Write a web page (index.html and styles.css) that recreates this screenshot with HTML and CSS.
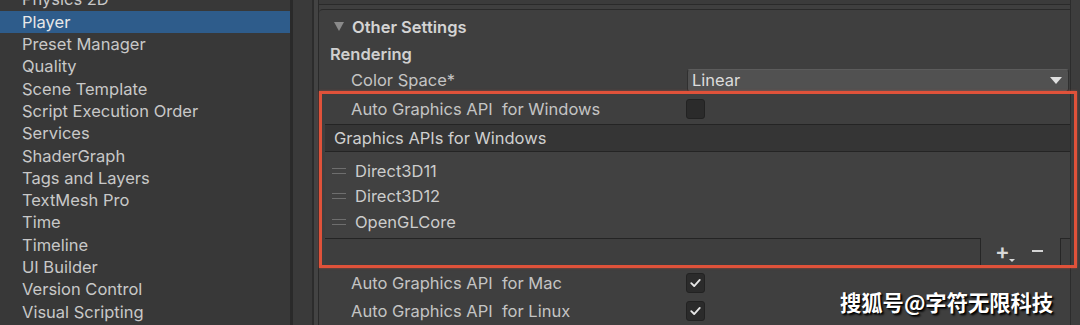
FILE: index.html
```html
<!DOCTYPE html>
<html lang="en">
<head>
    <meta charset="UTF-8">
    <title>Project Settings - Player</title>
    <link rel="stylesheet" href="styles.css">
</head>
<body>
    <div class="window">
        <!-- Settings category list -->
        <aside class="sidebar">
            <ul class="category-list">
                <li>Physics 2D</li>
                <li class="selected">Player</li>
                <li>Preset Manager</li>
                <li>Quality</li>
                <li>Scene Template</li>
                <li>Script Execution Order</li>
                <li>Services</li>
                <li>ShaderGraph</li>
                <li>Tags and Layers</li>
                <li>TextMesh Pro</li>
                <li>Time</li>
                <li>Timeline</li>
                <li>UI Builder</li>
                <li>Version Control</li>
                <li>Visual Scripting</li>
            </ul>
        </aside>

        <div class="splitter"></div>

        <!-- Inspector -->
        <main class="inspector">
            <div class="inspector-body">
                <div class="prev-section"></div>
                <section class="foldout">
                    <div class="foldout-header">
                        <span class="fold-arrow"></span>
                        <span>Other Settings</span>
                    </div>
                    <div class="group-title">Rendering</div>
                    <div class="field-row row-color">
                        <span class="field-label">Color Space*</span>
                        <div class="dropdown">
                            <span>Linear</span>
                            <span class="dropdown-arrow"></span>
                        </div>
                    </div>

                    <div class="highlight">
                        <div class="field-row row-windows">
                            <span class="field-label">Auto Graphics API&nbsp; for Windows</span>
                            <span class="checkbox"></span>
                        </div>
                        <div class="api-list">
                            <div class="api-header">Graphics APIs for Windows</div>
                            <div class="api-items">
                                <div class="api-item"><span class="handle"></span>Direct3D11</div>
                                <div class="api-item"><span class="handle"></span>Direct3D12</div>
                                <div class="api-item"><span class="handle"></span>OpenGLCore</div>
                            </div>
                            <div class="api-footer">
                                <div class="footer-fill"></div>
                                <div class="footer-buttons">
                                    <span class="btn-add">+<span class="caret"></span></span>
                                    <span class="btn-remove"></span>
                                </div>
                                <div class="footer-end"></div>
                            </div>
                        </div>
                    </div>

                    <div class="field-row row-after">
                        <span class="field-label">Auto Graphics API&nbsp; for Mac</span>
                        <span class="checkbox checked">
                            <svg viewBox="0 0 18 18" width="18" height="18"><path d="M4.5 9.2 L7.6 12.2 L13.5 5.8" fill="none" stroke="#e6e6e6" stroke-width="2" stroke-linecap="round" stroke-linejoin="round"/></svg>
                        </span>
                    </div>
                    <div class="field-row">
                        <span class="field-label">Auto Graphics API&nbsp; for Linux</span>
                        <span class="checkbox checked">
                            <svg viewBox="0 0 18 18" width="18" height="18"><path d="M4.5 9.2 L7.6 12.2 L13.5 5.8" fill="none" stroke="#e6e6e6" stroke-width="2" stroke-linecap="round" stroke-linejoin="round"/></svg>
                        </span>
                    </div>
                </section>
            </div>
            <div class="scroll-strip"></div>
        </main>
    </div>

    <div class="watermark">搜狐号@字符无限科技</div>
</body>
</html>
```

FILE: styles.css
```css
* {
    margin: 0;
    padding: 0;
    box-sizing: border-box;
}

body {
    background: #383838;
    color: #c6c6c6;
    font-family: Inter, "Noto Sans", Arial, sans-serif;
    font-size: 16.5px;
    width: 1080px;
    height: 325px;
    overflow: hidden;
    position: relative;
}

.window {
    display: flex;
    height: 325px;
}

/* Left category list */
.sidebar {
    width: 290px;
    background: #383838;
    overflow: hidden;
}

.category-list {
    list-style: none;
    margin-top: -11.8px;
}

.category-list li {
    height: 22.33px;
    line-height: 22.33px;
    padding-left: 22px;
    color: #c8c8c8;
    white-space: nowrap;
}

.category-list li.selected {
    background: #2e5c8b;
    color: #e8e8e8;
}

/* Splitter between panels */
.splitter {
    width: 28px;
    background: #3a3a3a;
    border-left: 3px solid #2a2a2a;
    border-right: 4px solid #434343;
    box-shadow: inset -2px 0 0 #2c2c2c;
}

/* Inspector */
.inspector {
    flex: 1;
    display: flex;
    background: #3f3f3f;
    border-left: 1px solid #2a2a2a;
}

.inspector-body {
    flex: 1;
}

.scroll-strip {
    width: 10px;
    border-left: 1px solid #2c2c2c;
    background: #3d3d3d;
}

.prev-section {
    height: 5px;
    border-bottom: 1px solid #2a2a2a;
    background: #3b3b3b;
}

.foldout {
    margin-top: 4px;
    border-top: 1px solid #2a2a2a;
    border-top-left-radius: 4px;
}

.foldout-header {
    height: 33px;
    display: flex;
    align-items: center;
    gap: 8px;
    padding-left: 15px;
    font-weight: 600;
    color: #d4d4d4;
}

.fold-arrow {
    width: 0;
    height: 0;
    border-left: 5px solid transparent;
    border-right: 5px solid transparent;
    border-top: 9px solid #8a8a8a;
}

.group-title {
    height: 23px;
    line-height: 23px;
    padding-left: 11px;
    font-weight: 600;
    color: #d0d0d0;
}

.field-row {
    height: 28px;
    display: flex;
    align-items: center;
    padding-left: 32px;
}

.field-label {
    width: 336px;
    white-space: nowrap;
    color: #c4c4c4;
}

.row-color {
    height: 28px;
}

.row-windows {
    height: 29px;
}

.row-after {
    margin-top: 4px;
}

.dropdown {
    flex: 1;
    height: 23px;
    margin-right: 1px;
    display: flex;
    align-items: center;
    justify-content: space-between;
    padding: 0 6px 0 4px;
    background: #515151;
    border: 1px solid #303030;
    border-top-color: #5c5c5c;
    border-radius: 3px;
    color: #dcdcdc;
}

.dropdown-arrow {
    width: 0;
    height: 0;
    border-left: 6px solid transparent;
    border-right: 6px solid transparent;
    border-top: 7px solid #e0e0e0;
}

.checkbox {
    width: 19px;
    height: 20px;
    margin-left: -1px;
    background: #2b2b2b;
    border: 1px solid #222222;
    border-radius: 3px;
    display: flex;
    align-items: center;
    justify-content: center;
}

/* Highlighted block with annotation frame */
.highlight {
    position: relative;
}

.highlight::after {
    content: "";
    position: absolute;
    left: 0;
    right: -7px;
    top: -3px;
    bottom: -3px;
    border: 3px solid #e0523a;
    box-shadow: 0 0 2px rgba(224, 82, 58, 0.6);
    pointer-events: none;
}

.api-list {
    margin: 1px 0 0 6px;
}

.api-header {
    height: 28px;
    line-height: 26px;
    padding-left: 9px;
    background: #353535;
    border-top: 1px solid #242424;
    border-bottom: 1px solid #242424;
    color: #cfcfcf;
}

.api-items {
    background: #414141;
    padding: 6px 0 3px;
}

.api-item {
    height: 25.5px;
    display: flex;
    align-items: center;
    padding-left: 7px;
    color: #cccccc;
}

.handle {
    width: 14px;
    height: 6px;
    margin-right: 9px;
    border-top: 1.5px solid #6e6e6e;
    border-bottom: 1.5px solid #6e6e6e;
}

.api-footer {
    display: flex;
    height: 27px;
}

.footer-fill {
    width: 656px;
    border-top: 1px solid #242424;
    border-right: 1px solid #262626;
    background: #3e3e3e;
}

.footer-buttons {
    width: 79px;
    display: flex;
    align-items: center;
    gap: 22px;
    padding-left: 14px;
    background: #414141;
}

.btn-add {
    position: relative;
    font-size: 22px;
    font-weight: 600;
    line-height: 1;
    color: #d8d8d8;
}

.caret {
    position: absolute;
    right: -5px;
    bottom: 0;
    border-left: 3px solid transparent;
    border-right: 3px solid transparent;
    border-top: 3px solid #d8d8d8;
}

.btn-remove {
    width: 11px;
    height: 2px;
    background: #d4d4d4;
}

.footer-end {
    flex: 1;
    border-left: 1px solid #262626;
    border-top: 1px solid #262626;
}

/* Watermark */
.watermark {
    position: absolute;
    left: 840px;
    top: 286px;
    font-family: "Noto Sans CJK SC", sans-serif;
    font-size: 21.3px;
    font-weight: 700;
    color: #ffffff;
    text-shadow: 1px 1px 1px #000, 2px 2px 2px rgba(0, 0, 0, 0.8);
    white-space: nowrap;
}
```
